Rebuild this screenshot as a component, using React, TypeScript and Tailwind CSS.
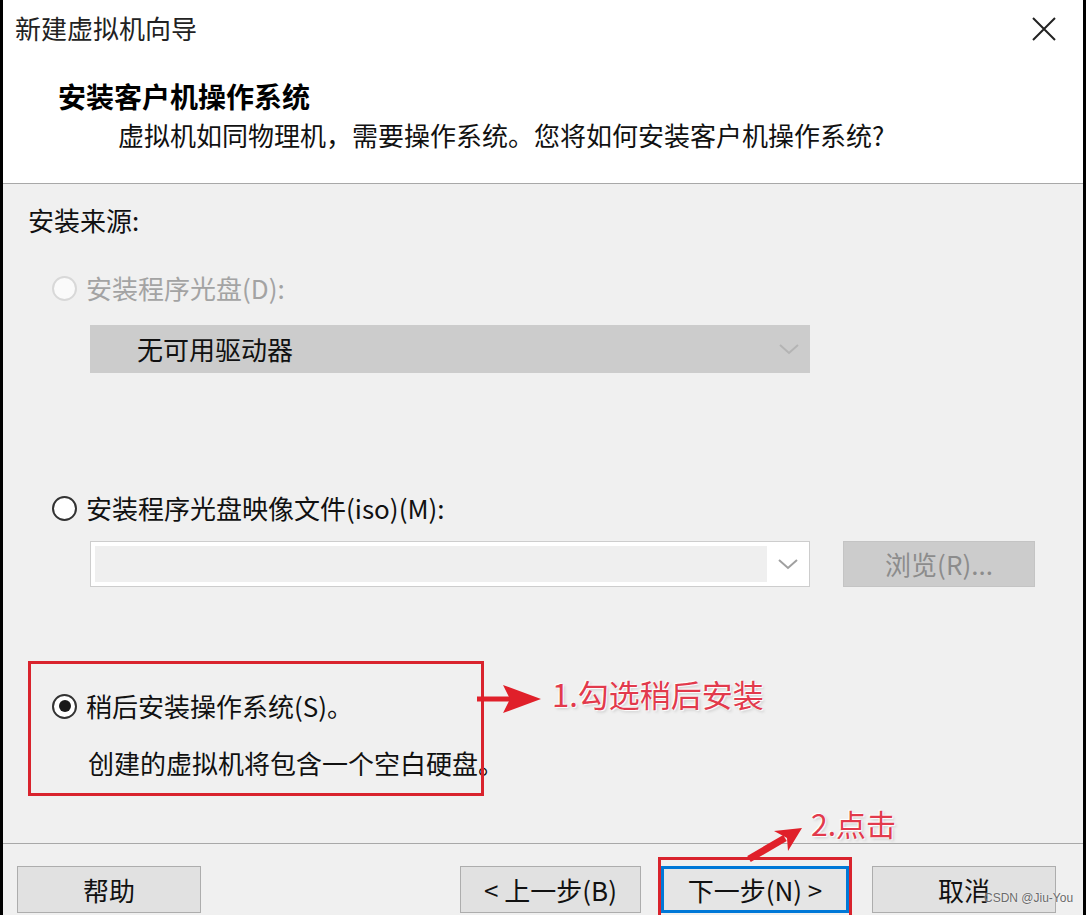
import React from "react";

const Radio = ({ checked = false, disabled = false }: { checked?: boolean; disabled?: boolean }) => (
  <div
    className={
      "w-[25px] h-[25px] rounded-full flex items-center justify-center shrink-0 " +
      (disabled ? "border-2 border-[#d8d8d8] bg-[#fafafa]" : "border-2 border-[#333333] bg-white")
    }
  >
    {checked && <div className="w-[12px] h-[12px] rounded-full bg-[#1a1a1a]" />}
  </div>
);

const Chevron = ({ color }: { color: string }) => (
  <svg width="22" height="14" viewBox="0 0 22 14" fill="none">
    <path d="M2 3 L11 11 L20 3" stroke={color} strokeWidth="2" />
  </svg>
);

export default function App() {
  return (
    <div className="relative w-[1086px] h-[915px] overflow-hidden font-['Noto_Sans_CJK_SC',sans-serif] text-[#111]">
      <div className="w-full h-full flex flex-col bg-[#f0f0f0] border-l-[3px] border-r-[3px] border-black">
        {/* Header */}
        <div className="h-[184px] shrink-0 bg-white border-b border-[#a8a8a8] flex flex-col relative">
          <div className="flex items-center justify-between pt-[10px] pl-[12px] pr-[26px]">
            <div className="text-[26px] leading-[36px] text-[#222]">新建虚拟机向导</div>
            <svg width="26" height="26" viewBox="0 0 26 26" className="mt-[2px]">
              <path d="M2 2 L24 24 M24 2 L2 24" stroke="#222" strokeWidth="2" />
            </svg>
          </div>
          <div className="mt-[32px] pl-[55px] text-[28px] leading-[36px] font-bold text-black">
            安装客户机操作系统
          </div>
          <div className="mt-[3px] pl-[115px] text-[26px] leading-[36px] text-[#111]">
            虚拟机如同物理机，需要操作系统。您将如何安装客户机操作系统?
          </div>
        </div>

        {/* Body */}
        <div className="flex-1 flex flex-col pt-[18px]">
          <div className="pl-[25px] text-[26px] leading-[36px]">安装来源:</div>

          <div className="mt-[32px] pl-[49px] flex items-center gap-[9px] h-[36px]">
            <Radio disabled />
            <span className="text-[26px] leading-[36px] text-[#a3a3a3]">安装程序光盘(D):</span>
          </div>

          <div className="mt-[19px] ml-[87px] w-[720px] h-[48px] bg-[#cccccc] flex items-center justify-between pl-[47px] pr-[10px]">
            <span className="text-[26px] leading-[36px] text-[#111]">无可用驱动器</span>
            <Chevron color="#b4b4b4" />
          </div>

          <div className="mt-[117px] pl-[49px] flex items-center gap-[9px] h-[36px]">
            <Radio />
            <span className="text-[26px] leading-[36px] text-[#111]">安装程序光盘映像文件(iso)(M):</span>
          </div>

          <div className="mt-[15px] ml-[87px] flex items-center gap-[33px] h-[46px]">
            <div className="w-[720px] h-[46px] border border-[#cdcdcd] bg-white flex">
              <div className="flex-1 m-[4px] mr-0 bg-[#efefef]" />
              <div className="w-[42px] flex items-center justify-center">
                <Chevron color="#a0a0a0" />
              </div>
            </div>
            <div className="w-[192px] h-[46px] bg-[#cccccc] border border-[#c4c4c4] flex items-center justify-center text-[26px] leading-[36px] text-[#8c8c8c]">
              浏览(R)...
            </div>
          </div>

          <div className="mt-[101px] pl-[49px] flex items-center gap-[9px] h-[36px]">
            <Radio checked />
            <span className="text-[26px] leading-[36px] text-[#111] whitespace-nowrap">稍后安装操作系统(S)。</span>
          </div>
          <div className="mt-[21px] pl-[85px] text-[26px] leading-[36px] whitespace-nowrap">
            创建的虚拟机将包含一个空白硬盘。
          </div>
        </div>

        {/* Footer */}
        <div className="h-[72px] shrink-0 border-t border-[#a8a8a8] flex items-start pt-[22px] pl-[14px] pr-[27px]">
          <div className="w-[184px] h-[47px] bg-[#e1e1e1] border border-[#adadad] flex items-center justify-center text-[26px] leading-[36px]">
            帮助
          </div>
          <div className="flex-1" />
          <div className="flex items-start">
            <div className="w-[181px] h-[47px] bg-[#e1e1e1] border border-[#adadad] flex items-center justify-center text-[26px] leading-[36px]">
              &lt; 上一步(B)
            </div>
            <div className="ml-[20px] w-[188px] h-[47px] bg-[#e5e5e5] border-[3px] border-[#0078d7] flex items-center justify-center text-[26px] leading-[36px]">
              下一步(N) &gt;
            </div>
            <div className="ml-[23px] w-[184px] h-[47px] bg-[#e1e1e1] border border-[#adadad] flex items-center justify-center text-[26px] leading-[36px]">
              取消
            </div>
          </div>
        </div>
      </div>

      {/* Annotations overlay */}
      <div className="absolute left-[28px] top-[661px] w-[456px] h-[135px] border-[3px] border-[#d9232d]" />
      <div className="absolute left-[658px] top-[857px] w-[194px] h-[64px] border-[3px] border-[#d9232d]" />

      <svg className="absolute left-0 top-0" width="1086" height="915" viewBox="0 0 1086 915">
        <line x1="477" y1="699" x2="510" y2="699" stroke="#e0202a" strokeWidth="5" />
        <polygon points="503,685 541,699 503,713 510,699" fill="#e0202a" />
        <line x1="749" y1="859" x2="785" y2="838" stroke="#e0202a" strokeWidth="7" />
        <polygon points="802,828 788,851 787,838 774,831" fill="#e0202a" />
      </svg>

      <div className="absolute left-[552px] top-[674px] text-[31px] leading-[40px] text-[#e23a4c] [text-shadow:1px_1px_1px_#ffffff,-1px_-1px_1px_#ffffff,2px_2px_3px_#c8c8c8] whitespace-nowrap">
        1.勾选稍后安装
      </div>
      <div className="absolute left-[811px] top-[803px] text-[30px] leading-[40px] text-[#e23a4c] [text-shadow:1px_1px_1px_#ffffff,-1px_-1px_1px_#ffffff,2px_2px_3px_#c8c8c8] whitespace-nowrap">
        2.点击
      </div>

      <div className="absolute left-[984px] top-[890px] text-[12px] leading-[16px] text-[#6a6a6a] font-['Liberation_Sans',sans-serif] [text-shadow:0_0_2px_#ffffff] whitespace-nowrap">
        CSDN @Jiu-You
      </div>
    </div>
  );
}
